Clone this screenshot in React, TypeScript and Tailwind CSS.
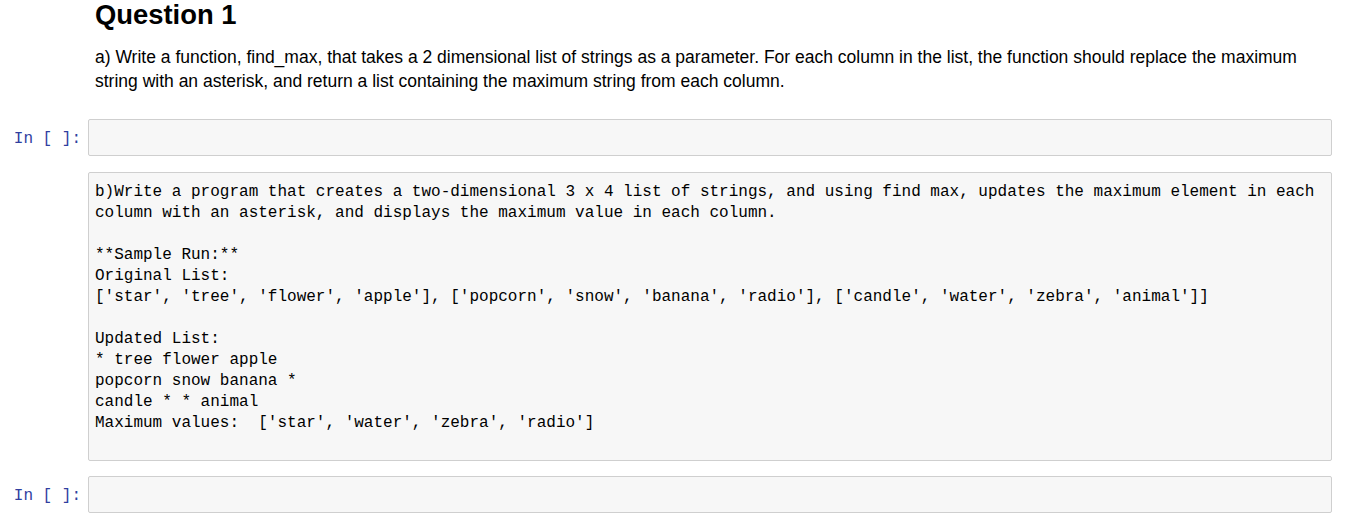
import React from "react";

const mono = { fontFamily: '"Liberation Mono", "DejaVu Sans Mono", monospace' };
const sans = { fontFamily: '"Liberation Sans", Arial, sans-serif' };

function Prompt({ label }: { label: string }) {
  return (
    <div
      className="w-[88px] shrink-0 text-right pr-[7px] pt-[10px] text-[16px] leading-[21px] text-[#303f9f] whitespace-pre"
      style={mono}
    >
      {label}
    </div>
  );
}

function CodeBox({ lines }: { lines: string[] }) {
  return (
    <div
      className="flex-1 border border-[#cfcfcf] rounded-[2px] bg-[#f7f7f7] pl-[6px] pr-2 pt-[9px] pb-[5px] text-[16px] leading-[21px] text-black whitespace-pre"
      style={mono}
    >
      {lines.map((l, i) => (
        <div key={i} className="h-[21px]">
          {l}
        </div>
      ))}
    </div>
  );
}

export default function App() {
  const md = [
    "b)Write a program that creates a two-dimensional 3 x 4 list of strings, and using find max, updates the maximum element in each",
    "column with an asterisk, and displays the maximum value in each column.",
    "",
    "**Sample Run:**",
    "Original List:",
    "['star', 'tree', 'flower', 'apple'], ['popcorn', 'snow', 'banana', 'radio'], ['candle', 'water', 'zebra', 'animal']]",
    "",
    "Updated List:",
    "* tree flower apple",
    "popcorn snow banana *",
    "candle * * animal",
    "Maximum values:  ['star', 'water', 'zebra', 'radio']",
    "",
  ];
  return (
    <div className="w-[1349px] h-[520px] bg-white overflow-hidden pr-[17px]">
      <div className="flex">
        <div className="w-[88px] shrink-0" />
        <div className="flex-1 pl-[7px] pr-2 text-black" style={sans}>
          <h1 className="text-[27.4px] leading-[27px] font-bold pt-[1px]">Question 1</h1>
          <p className="mt-[17px] text-[17.5px] leading-[24px]">
            a) Write a function, find_max, that takes a 2 dimensional list of strings as a parameter. For each column in the list, the function should replace the maximum string with an asterisk, and return a list containing the maximum string from each column.
          </p>
        </div>
      </div>

      <div className="flex mt-[26px]">
        <Prompt label="In [ ]:" />
        <CodeBox lines={[""]} />
      </div>

      <div className="flex mt-[16px]">
        <div className="w-[88px] shrink-0" />
        <CodeBox lines={md} />
      </div>

      <div className="flex mt-[15px]">
        <Prompt label="In [ ]:" />
        <CodeBox lines={[""]} />
      </div>
    </div>
  );
}
